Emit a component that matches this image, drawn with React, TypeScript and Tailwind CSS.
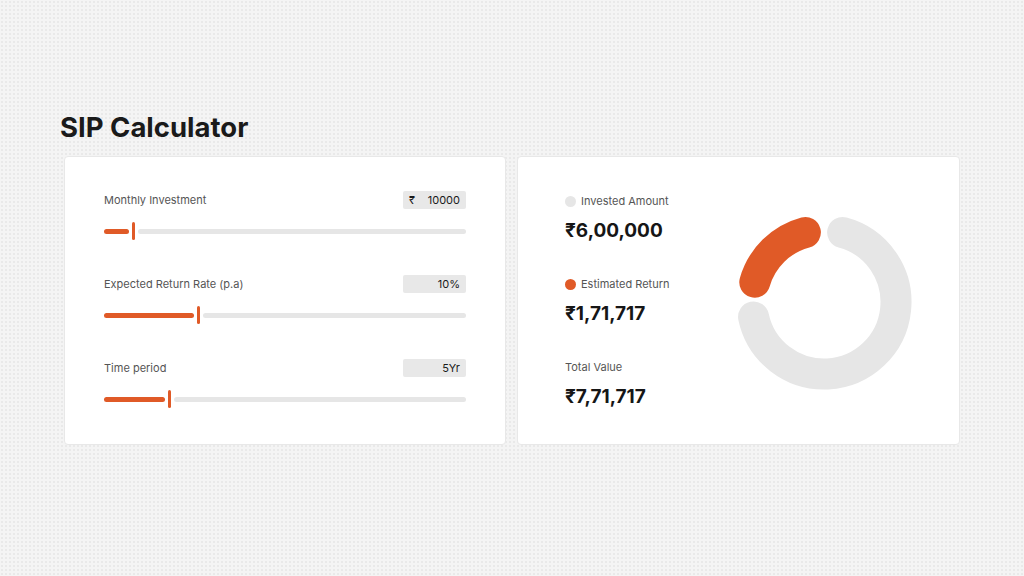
import React from "react";

const ORANGE = "#e05a27";

function Slider({ fill }: { fill: number }) {
  return (
    <div className="flex items-center h-[18px]">
      <div className="h-[5px] rounded-full bg-[#e05a27]" style={{ width: fill }} />
      <div className="ml-[3px] w-[3px] h-[18px] rounded-full bg-[#e05a27]" />
      <div className="ml-[3px] flex-1 h-[5px] rounded-full bg-[#e6e6e6]" />
    </div>
  );
}

function Row({ label, value, rupee, fill }: { label: string; value: string; rupee?: boolean; fill: number }) {
  return (
    <div className="flex flex-col">
      <div className="flex items-center justify-between h-[18px]">
        <span className="text-[11px] text-[#555555] pt-[1px]">{label}</span>
        <div className="w-[63px] h-[18px] bg-[#e8e8e8] rounded-[2px] flex items-center justify-between px-[6px] text-[11px] text-[#1a1a1a]">
          <span>{rupee ? "₹" : ""}</span>
          <span>{value}</span>
        </div>
      </div>
      <div className="mt-[13px]">
        <Slider fill={fill} />
      </div>
    </div>
  );
}

function Stat({ label, value, dot }: { label: string; value: string; dot?: string }) {
  return (
    <div className="flex flex-col">
      <div className="flex items-center h-[14px]">
        {dot && <span className="w-[11px] h-[11px] rounded-full mr-[5px]" style={{ background: dot }} />}
        <span className="text-[11px] text-[#555555]">{label}</span>
      </div>
      <div className="mt-[10px] h-[24px] flex items-center text-[19px] font-bold text-[#161616] leading-none">{value}</div>
    </div>
  );
}

export default function App() {
  return (
    <div
      className="w-[1024px] h-[576px] bg-[#f4f4f4] bg-[radial-gradient(#e9e9e9_1px,transparent_1px)] bg-[size:4px_4px] px-[64px] pt-[111px]"
      style={{ fontFamily: "Inter, 'Noto Sans', 'DejaVu Sans', sans-serif" }}
    >
      <h1 className="-ml-[4px] text-[27.5px] leading-[32px] font-bold text-[#1a1a1a]">SIP Calculator</h1>
      <div className="mt-[13px] flex gap-[11px]">
        <div className="w-[442px] h-[289px] bg-white border border-[#e8e8e8] rounded-[4px] px-[39px] pt-[34px] flex flex-col gap-[35px]">
          <Row label="Monthly Investment" value="10000" rupee fill={25} />
          <Row label="Expected Return Rate (p.a)" value="10%" fill={90} />
          <Row label="Time period" value="5Yr" fill={61} />
        </div>
        <div className="flex-1 h-[289px] bg-white border border-[#e8e8e8] rounded-[4px] pl-[47px] pr-[47px] pt-[2px] flex items-center justify-between">
          <div className="flex flex-col gap-[35px]">
            <Stat label="Invested Amount" value="₹6,00,000" dot="#e6e6e6" />
            <Stat label="Estimated Return" value="₹1,71,717" dot={ORANGE} />
            <Stat label="Total Value" value="₹7,71,717" />
          </div>
          <svg width="176" height="176" viewBox="0 0 176 176">
            <path
              d="M 106.63 18.45 A 72 72 0 1 1 17.57 102.97"
              fill="none"
              stroke="#e6e6e6"
              strokeWidth="31"
              strokeLinecap="round"
            />
            <path
              d="M 18.79 68.15 A 72 72 0 0 1 69.37 18.45"
              fill="none"
              stroke={ORANGE}
              strokeWidth="31"
              strokeLinecap="round"
            />
          </svg>
        </div>
      </div>
    </div>
  );
}
